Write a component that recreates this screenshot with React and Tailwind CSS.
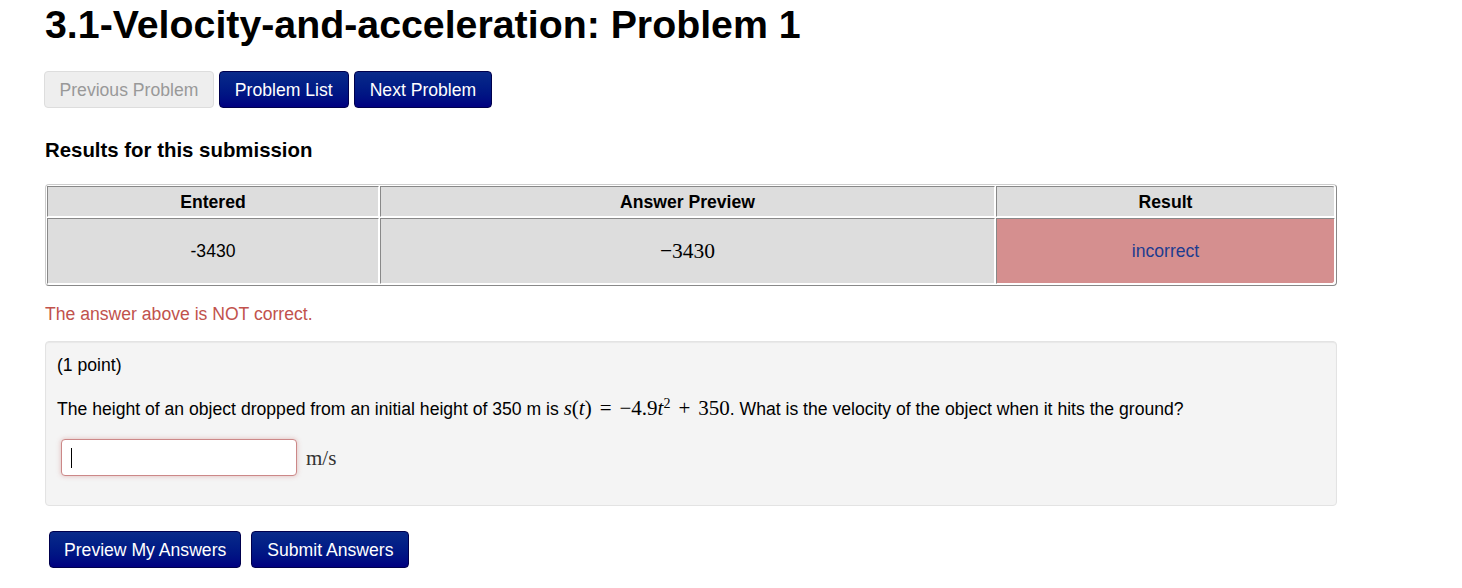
export default function App() {
  const btnBlue =
    "h-[37px] rounded-[4px] border border-[#00004d] bg-gradient-to-b from-[#0a2a8a] to-[#000080] text-[17.6px] text-white";
  const cell = "border border-t-[#888] border-l-[#888] border-r-white border-b-white bg-[#ddd]";

  return (
    <div className="min-h-[588px] bg-white font-['Liberation_Sans',Arial,sans-serif] text-[17.6px] leading-[24px] text-black">
      <div className="pl-[45px] pr-[125px]">
        <h1 className="pt-[2px] text-[39.3px] font-bold leading-[44px]">
          3.1-Velocity-and-acceleration: Problem 1
        </h1>

        <div className="mt-[25px] flex gap-[5px] -ml-px">
          <button
            type="button"
            className="h-[37px] rounded-[4px] border border-[#ddd] bg-[#eee] px-[14.5px] text-[17.6px] text-[#999]"
          >
            Previous Problem
          </button>
          <button type="button" className={`${btnBlue} px-[15px]`}>
            Problem List
          </button>
          <button type="button" className={`${btnBlue} px-[15px]`}>
            Next Problem
          </button>
        </div>

        <h3 className="mt-[29px] text-[20.4px] font-bold leading-[26px]">
          Results for this submission
        </h3>

        <table className="mt-[21px] w-full border-separate border-spacing-px rounded-[4px] border border-t-[#ccc] border-l-[#ccc] border-r-[#888] border-b-[#888] bg-white text-center">
          <thead>
            <tr>
              <th className={`h-[31px] w-[332px] font-bold ${cell}`}>Entered</th>
              <th className={`font-bold ${cell}`}>Answer Preview</th>
              <th className={`w-[339px] rounded-tr-[3px] font-bold ${cell}`}>Result</th>
            </tr>
          </thead>
          <tbody>
            <tr>
              <td className={`h-[66px] ${cell}`}>-3430</td>
              <td className={`font-['Liberation_Serif',serif] text-[21.5px] ${cell}`}>−3430</td>
              <td className="rounded-br-[3px] border border-t-[#888] border-l-[#888] border-r-white border-b-white bg-[#d58f8f] text-[#1d3c8f]">
                incorrect
              </td>
            </tr>
          </tbody>
        </table>

        <p className="mt-[16px] text-[#c1524c]">The answer above is NOT correct.</p>

        <div className="mt-[15px] rounded-[4px] border border-[#e3e3e3] bg-[#f4f4f4] px-[11px] pb-[29px] pt-[11px] shadow-[inset_0_1px_1px_rgba(0,0,0,0.05)]">
          <p>(1 point)</p>
          <p className="mt-[20px]">
            The height of an object dropped from an initial height of 350 m is{" "}
            <span className="font-['Liberation_Serif',serif] text-[21px] leading-none">
              <i>s</i>(<i>t</i>)<span className="mx-[8px]">=</span>−4.9<i>t</i>
              <sup className="text-[14px]">2</sup>
              <span className="mx-[8px]">+</span>350
            </span>
            . What is the velocity of the object when it hits the ground?
          </p>
          <div className="mt-[18px] flex items-center gap-[9px] pl-[4px]">
            <div className="flex h-[37px] w-[236px] items-center rounded-[4px] border border-[#c88] bg-white pl-[9px] shadow-[0_0_5px_rgba(185,74,72,0.35)]">
              <span className="h-[20px] w-px bg-black" />
            </div>
            <span className="font-['Liberation_Serif',serif] text-[21px] text-[#333]">m/s</span>
          </div>
        </div>

        <div className="mt-[25px] flex gap-[10px] pl-[4px]">
          <button type="button" className={`${btnBlue} px-[14px]`}>
            Preview My Answers
          </button>
          <button type="button" className={`${btnBlue} px-[15px]`}>
            Submit Answers
          </button>
        </div>
      </div>
    </div>
  );
}
